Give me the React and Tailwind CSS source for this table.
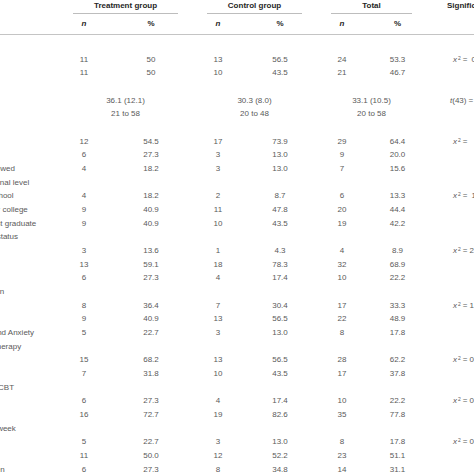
import React from 'react';

// column tracks: label | Tn | gap | T% | gap | Cn | gap | C% | gap | Totn | gap | Tot% | gap | sig
const grid =
  'grid grid-cols-[123px_22px_29px_54px_29px_22px_29px_44px_29px_22px_30px_29px_35px_110px]';

const rows = [
  { label: 'Gender' },
  { label: 'Male', v: ['11', '50', '13', '56.5', '24', '53.3'], sig: ['x', '0.09, p = .76', 4] },
  { label: 'Female', v: ['11', '50', '10', '43.5', '21', '46.7'] },
  { label: 'Age (years)' },
  { label: 'Mean (SD)', m: ['36.1 (12.1)', '30.3 (8.0)', '33.1 (10.5)'], sig: ['t', '1.80, p = .08', 3] },
  { label: 'Range', m: ['21 to 58', '20 to 48', '20 to 58'] },
  { label: 'Marital status' },
  { label: 'Single', v: ['12', '54.5', '17', '73.9', '29', '64.4'], sig: ['x', '1.99, p = .37', 9] },
  { label: 'Married', v: ['6', '27.3', '3', '13.0', '9', '20.0'] },
  { label: 'Divorced/widowed', v: ['4', '18.2', '3', '13.0', '7', '15.6'] },
  { label: 'Final educational level' },
  { label: 'Secondary school', v: ['4', '18.2', '2', '8.7', '6', '13.3'], sig: ['x', '1.47, p = .48', 4] },
  { label: 'Polytechnic or college', v: ['9', '40.9', '11', '47.8', '20', '44.4'] },
  { label: 'University post graduate', v: ['9', '40.9', '10', '43.5', '19', '42.2'] },
  { label: 'Employment status' },
  { label: 'Employed', v: ['3', '13.6', '1', '4.3', '4', '8.9'], sig: ['x', '2.06, p = .36', 2] },
  { label: 'Unemployed', v: ['13', '59.1', '18', '78.3', '32', '68.9'] },
  { label: 'Student', v: ['6', '27.3', '4', '17.4', '10', '22.2'] },
  { label: 'Primary reason' },
  { label: 'Depression', v: ['8', '36.4', '7', '30.4', '17', '33.3'], sig: ['x', '1.03, p = .60', 2] },
  { label: 'Anxiety', v: ['9', '40.9', '13', '56.5', '22', '48.9'] },
  { label: 'Depression and Anxiety', v: ['5', '22.7', '3', '13.0', '8', '17.8'] },
  { label: 'Prior psychotherapy' },
  { label: 'Yes', v: ['15', '68.2', '13', '56.5', '28', '62.2'], sig: ['x', '0.69, p = .41', 2] },
  { label: 'No', v: ['7', '31.8', '10', '43.5', '17', '37.8'] },
  { label: 'Prior internet CBT' },
  { label: 'Yes', v: ['6', '27.3', '4', '17.4', '10', '22.2'], sig: ['x', '0.61, p = .43', 2] },
  { label: 'No', v: ['16', '72.7', '19', '82.6', '35', '77.8'] },
  { label: 'Hours online/week' },
  { label: 'Less than five', v: ['5', '22.7', '3', '13.0', '8', '17.8'], sig: ['x', '0.56, p = .76', 2] },
  { label: 'Five to ten', v: ['11', '50.0', '12', '52.2', '23', '51.1'] },
  { label: 'Higher than ten', v: ['6', '27.3', '8', '34.8', '14', '31.1'] },
];

const Sig = ({ sig }) => {
  if (!sig) return null;
  const [sym, value, gap] = sig;
  if (sym === 't') {
    return (
      <div className="col-start-14 flex whitespace-nowrap pl-[3px]">
        <span className="italic">t</span>
        <span>(43)</span>
        <span className="ml-[2px]">=</span>
        <span style={{ marginLeft: gap }}>{value}</span>
      </div>
    );
  }
  return (
    <div className="col-start-14 flex whitespace-nowrap pl-[6px]">
      <span className="italic">x</span>
      <sup className="text-[5px] leading-none relative top-[3px] ml-[1px]">2</sup>
      <span className="ml-[2px]">=</span>
      <span style={{ marginLeft: gap }}>{value}</span>
    </div>
  );
};

const BodyRow = ({ row }) => (
  <div className={`${grid} h-[13.68px] leading-[13.68px]`}>
    <div className="col-start-1 whitespace-nowrap">{row.label}</div>
    {row.v && (
      <>
        <div className="col-start-2 text-center">{row.v[0]}</div>
        <div className="col-start-4 text-center">{row.v[1]}</div>
        <div className="col-start-6 text-center">{row.v[2]}</div>
        <div className="col-start-8 text-center">{row.v[3]}</div>
        <div className="col-start-10 text-center">{row.v[4]}</div>
        <div className="col-start-12 text-center">{row.v[5]}</div>
      </>
    )}
    {row.m && (
      <>
        <div className="col-start-2 col-span-3 text-center whitespace-nowrap">{row.m[0]}</div>
        <div className="col-start-6 col-span-3 text-center whitespace-nowrap">{row.m[1]}</div>
        <div className="col-start-10 col-span-3 text-center whitespace-nowrap">{row.m[2]}</div>
      </>
    )}
    <Sig sig={row.sig} />
  </div>
);

export default function App() {
  return (
    <div className="w-[474px] h-[474px] overflow-hidden bg-white">
      <div
        className="w-[597px] -ml-[50px] text-[8px] text-[#5a5a5a]"
        style={{ fontFamily: '"Liberation Sans", Arial, sans-serif' }}
      >
        {/* group headings */}
        <div className={`${grid} h-[14px] font-bold text-[#262626]`}>
          <div className="col-start-2 col-span-3 text-center leading-[11px] border-b border-[#bdbdbd]">
            Treatment group
          </div>
          <div className="col-start-6 col-span-3 text-center leading-[11px] border-b border-[#bdbdbd]">
            Control group
          </div>
          <div className="col-start-10 col-span-3 text-center leading-[11px] border-b border-[#bdbdbd]">
            Total
          </div>
          <div className="col-start-14 leading-[11px] whitespace-nowrap">Significance</div>
        </div>
        {/* n / % */}
        <div className={`${grid} h-[20px] leading-[20px] font-bold text-[#262626]`}>
          <div className="col-start-2 text-center italic">n</div>
          <div className="col-start-4 text-center">%</div>
          <div className="col-start-6 text-center italic">n</div>
          <div className="col-start-8 text-center">%</div>
          <div className="col-start-10 text-center italic">n</div>
          <div className="col-start-12 text-center">%</div>
        </div>
        <div className="h-px bg-[#c4c4c4]" />
        <div className="pt-[4px]">
          {rows.map((row, i) => (
            <BodyRow key={i} row={row} />
          ))}
        </div>
      </div>
    </div>
  );
}
